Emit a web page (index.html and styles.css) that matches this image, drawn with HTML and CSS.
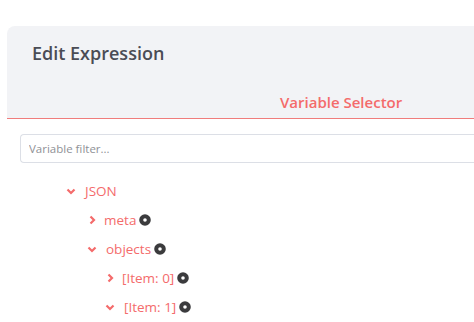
FILE: index.html
```html
<!DOCTYPE html>
<html lang="en">
<head>
  <meta charset="UTF-8" />
  <meta name="viewport" content="width=device-width, initial-scale=1.0"/>
  <title>Edit Expression</title>
  <link rel="stylesheet" href="styles.css">
</head>
<body>
<div class="dialog">
  <div class="dialog-header">
    <div class="dialog-title">Edit Expression</div>
    <div class="tab active">Variable Selector</div>
  </div>
  <div class="dialog-body">
    <input class="filter" type="text" placeholder="Variable filter...">
    <ul class="tree">
      <li class="node lvl-0">
        <span class="caret"><svg viewBox="0 0 10 10"><path d="M1.5 3.5 L5 7 L8.5 3.5"/></svg></span>
        <span class="label">JSON</span>
      </li>
      <li class="node lvl-1">
        <span class="caret closed"><svg viewBox="0 0 10 10"><path d="M3.5 1.5 L7 5 L3.5 8.5"/></svg></span>
        <span class="label">meta</span>
        <span class="dot"><svg viewBox="0 0 12 12"><circle cx="6" cy="6" r="3.8"/></svg></span>
      </li>
      <li class="node lvl-1">
        <span class="caret"><svg viewBox="0 0 10 10"><path d="M1.5 3.5 L5 7 L8.5 3.5"/></svg></span>
        <span class="label">objects</span>
        <span class="dot"><svg viewBox="0 0 12 12"><circle cx="6" cy="6" r="3.8"/></svg></span>
      </li>
      <li class="node lvl-2">
        <span class="caret closed"><svg viewBox="0 0 10 10"><path d="M3.5 1.5 L7 5 L3.5 8.5"/></svg></span>
        <span class="label">[Item: 0]</span>
        <span class="dot"><svg viewBox="0 0 12 12"><circle cx="6" cy="6" r="3.8"/></svg></span>
      </li>
      <li class="node lvl-2">
        <span class="caret"><svg viewBox="0 0 10 10"><path d="M1.5 3.5 L5 7 L8.5 3.5"/></svg></span>
        <span class="label">[Item: 1]</span>
        <span class="dot"><svg viewBox="0 0 12 12"><circle cx="6" cy="6" r="3.8"/></svg></span>
      </li>
    </ul>
  </div>
</div>
</body>
</html>
```
FILE: styles.css
```css
body {
  margin: 0;
  background-color: white;
  font-family: "Open Sans", Arial, sans-serif;
  overflow: hidden;
}

.dialog {
  margin: 26px 0 0 7px;
  width: 467px;
}

.dialog-header {
  background-color: #f2f3f6;
  border-top-left-radius: 8px;
  border-bottom: 1px solid #f07c7c;
  height: 93px;
  padding-left: 25px;
  box-sizing: border-box;
}

.dialog-title {
  padding-top: 15px;
  font-size: 18px;
  font-weight: 600;
  color: #4a4c55;
  line-height: 24px;
}

.tab {
  margin: 27px 0 0 248px;
  font-size: 15px;
  font-weight: 600;
  color: #f46b6b;
  line-height: 20px;
}

.dialog-body {
  padding: 15px 0 0 13px;
}

.filter {
  display: block;
  width: 470px;
  height: 29px;
  box-sizing: border-box;
  border: 1px solid #dcdfe6;
  border-right: none;
  border-radius: 4px 0 0 4px;
  padding: 0 8px;
  font-family: "Open Sans", Arial, sans-serif;
  font-size: 11.5px;
  outline: none;
}

.filter::placeholder {
  color: #8f9196;
}

.tree {
  list-style: none;
  margin: 13px 0 0;
  padding: 0;
}

.node {
  display: flex;
  align-items: center;
  height: 29px;
  color: #f46b6b;
  font-size: 13.5px;
}

.lvl-0 { padding-left: 46px; }
.lvl-1 { padding-left: 67px; }
.lvl-2 { padding-left: 85px; }

.caret {
  width: 19px;
  height: 10px;
  display: flex;
}

.caret.closed {
  width: 17px;
}

.caret svg {
  width: 10px;
  height: 10px;
  fill: none;
  stroke: #f46b6b;
  stroke-width: 2.2;
}

.dot {
  display: flex;
  margin-left: 3px;
}

.dot svg {
  width: 12px;
  height: 12px;
  fill: none;
  stroke: #3b3b3d;
  stroke-width: 4;
}
```
